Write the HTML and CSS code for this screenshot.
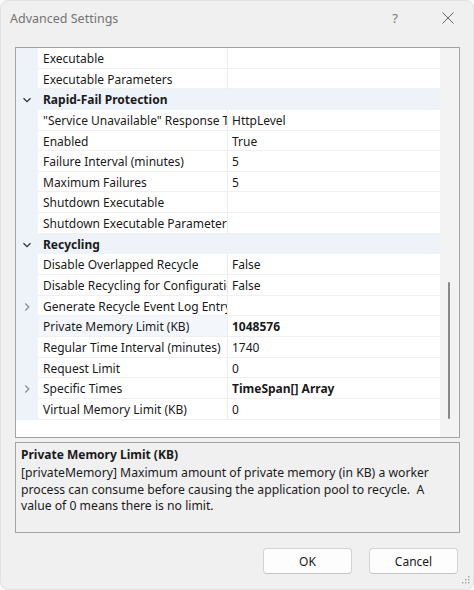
FILE: index.html
```html
<!DOCTYPE html>
<html>
<head>
<meta charset="utf-8">
<link rel="stylesheet" href="styles.css">
</head>
<body>
<div class="window">
  <div class="titlebar">
    <span class="title">Advanced Settings</span>
    <span class="help">?</span>
    <svg class="close" width="14" height="14" viewBox="0 0 14 14"><path d="M1.5 1.5 L12.5 12.5 M12.5 1.5 L1.5 12.5" stroke="#666" stroke-width="1" fill="none"/></svg>
  </div>
  <div class="grid">
    <div class="rows">
      <div class="row"><div class="margin"></div><div class="name">Executable</div><div class="value"></div></div>
      <div class="row"><div class="margin"></div><div class="name">Executable Parameters</div><div class="value"></div></div>
      <div class="row cat"><div class="margin"><svg width="10" height="10" viewBox="0 0 10 10"><path d="M1.5 3.2 L5 6.7 L8.5 3.2" stroke="#333" stroke-width="1.3" fill="none"/></svg></div><div class="name">Rapid-Fail Protection</div></div>
      <div class="row"><div class="margin"></div><div class="name">"Service Unavailable" Response Type</div><div class="value">HttpLevel</div></div>
      <div class="row"><div class="margin"></div><div class="name">Enabled</div><div class="value">True</div></div>
      <div class="row"><div class="margin"></div><div class="name">Failure Interval (minutes)</div><div class="value">5</div></div>
      <div class="row"><div class="margin"></div><div class="name">Maximum Failures</div><div class="value">5</div></div>
      <div class="row"><div class="margin"></div><div class="name">Shutdown Executable</div><div class="value"></div></div>
      <div class="row"><div class="margin"></div><div class="name">Shutdown Executable Parameters</div><div class="value"></div></div>
      <div class="row cat"><div class="margin"><svg width="10" height="10" viewBox="0 0 10 10"><path d="M1.5 3.2 L5 6.7 L8.5 3.2" stroke="#333" stroke-width="1.3" fill="none"/></svg></div><div class="name">Recycling</div></div>
      <div class="row"><div class="margin"></div><div class="name">Disable Overlapped Recycle</div><div class="value">False</div></div>
      <div class="row"><div class="margin"></div><div class="name">Disable Recycling for Configuration Changes</div><div class="value">False</div></div>
      <div class="row"><div class="margin"><svg width="10" height="10" viewBox="0 0 10 10"><path d="M3.3 1.5 L6.8 5 L3.3 8.5" stroke="#8a8a8a" stroke-width="1.2" fill="none"/></svg></div><div class="name">Generate Recycle Event Log Entry</div><div class="value"></div></div>
      <div class="row selected"><div class="margin"></div><div class="name">Private Memory Limit (KB)</div><div class="value bold">1048576</div></div>
      <div class="row"><div class="margin"></div><div class="name">Regular Time Interval (minutes)</div><div class="value">1740</div></div>
      <div class="row"><div class="margin"></div><div class="name">Request Limit</div><div class="value">0</div></div>
      <div class="row"><div class="margin"><svg width="10" height="10" viewBox="0 0 10 10"><path d="M3.3 1.5 L6.8 5 L3.3 8.5" stroke="#8a8a8a" stroke-width="1.2" fill="none"/></svg></div><div class="name">Specific Times</div><div class="value bold">TimeSpan[] Array</div></div>
      <div class="row last"><div class="margin"></div><div class="name">Virtual Memory Limit (KB)</div><div class="value">0</div></div>
    </div>
    <div class="scrollbar"><div class="thumb"></div></div>
  </div>
  <div class="desc">
    <div class="desc-title">Private Memory Limit (KB)</div>
    <div class="desc-text">[privateMemory] Maximum amount of private memory (in KB) a worker process can consume before causing the application pool to recycle.&nbsp; A value of 0 means there is no limit.</div>
  </div>
  <div class="buttons">
    <button class="btn">OK</button>
    <button class="btn">Cancel</button>
  </div>
  <svg class="grip" width="12" height="12" viewBox="0 0 12 12">
    <g fill="#a8a8a8">
      <rect x="9" y="1" width="1.5" height="1.5"/>
      <rect x="6" y="4" width="1.5" height="1.5"/><rect x="9" y="4" width="1.5" height="1.5"/>
      <rect x="3" y="7" width="1.5" height="1.5"/><rect x="6" y="7" width="1.5" height="1.5"/><rect x="9" y="7" width="1.5" height="1.5"/>
    </g>
  </svg>
</div>
</body>
</html>
```

FILE: styles.css
```css
html, body {
  margin: 0;
  padding: 0;
  background: #fbfbfb;
}
body {
  width: 474px;
  height: 590px;
  overflow: hidden;
  font-family: "Noto Sans", "Open Sans", sans-serif;
  font-size: 12px;
  color: #1a1a1a;
}
.window {
  position: relative;
  box-sizing: border-box;
  width: 474px;
  height: 590px;
  background: #f0f0f0;
  border-radius: 8px;
  border: 1px solid #e2e2e2;
  display: flex;
  flex-direction: column;
}
.titlebar {
  height: 35px;
  display: flex;
  align-items: center;
  padding-left: 9px;
  flex: none;
}
.title {
  flex: 1;
  color: #737373;
  font-size: 12.5px;
  padding-bottom: 1px;
}
.help {
  color: #777;
  font-size: 13px;
  margin-right: 43px;
  padding-bottom: 2px;
}
.close {
  margin-right: 18px;
  margin-bottom: 1px;
}
.grid {
  margin: 11px 0 0 14px;
  width: 445px;
  height: 391px;
  box-sizing: border-box;
  border: 1px solid #a3a3a3;
  background: #ffffff;
  display: flex;
  flex: none;
}
.rows {
  width: 424px;
  display: flex;
  flex-direction: column;
}
.row {
  height: 20.65px;
  display: flex;
  flex: none;
}
.margin {
  width: 22px;
  flex: none;
  background: #eef3f9;
  display: flex;
  align-items: center;
  justify-content: center;
  box-sizing: border-box;
  padding-top: 1px;
}
.name {
  width: 190px;
  flex: none;
  box-sizing: border-box;
  padding-left: 5px;
  padding-top: 1px;
  white-space: nowrap;
  overflow: hidden;
  line-height: 19px;
  border-bottom: 1px solid #f0f0f0;
  border-right: 1px solid #ececec;
}
.value {
  flex: 1;
  padding-left: 4px;
  padding-top: 1px;
  white-space: nowrap;
  overflow: hidden;
  line-height: 19px;
  border-bottom: 1px solid #f0f0f0;
}
.bold {
  font-weight: bold;
}
.row.cat {
  background: #eef3f9;
}
.row.cat .name {
  flex: 1;
  border: none;
  font-weight: bold;
}
.row.selected .name {
  background: #f3f7fc;
}
.scrollbar {
  flex: 1;
  background: #f3f3f3;
  position: relative;
}
.thumb {
  position: absolute;
  left: 8px;
  top: 234px;
  width: 2px;
  height: 137px;
  background: #8a8a8a;
  border-radius: 1px;
}
.desc {
  margin: 4px 0 0 14px;
  width: 445px;
  height: 91px;
  box-sizing: border-box;
  border: 1px solid #a3a3a3;
  background: #f0f0f0;
  padding: 3px 14px 0 5px;
  flex: none;
}
.desc-title {
  font-weight: bold;
  line-height: 17px;
}
.desc-text {
  font-size: 12.2px;
  line-height: 16.5px;
  margin-top: 2px;
}
.buttons {
  display: flex;
  justify-content: flex-end;
  gap: 17px;
  margin: 15px 15px 0 0;
}
.btn {
  width: 89px;
  height: 26px;
  background: #fdfdfd;
  border: 1px solid #d3d3d3;
  border-bottom-color: #c4c4c4;
  border-radius: 4px;
  font-family: "Noto Sans", "Open Sans", sans-serif;
  font-size: 12px;
  color: #1a1a1a;
  padding: 0;
}
.grip {
  position: absolute;
  right: 2px;
  bottom: 2px;
}
```
